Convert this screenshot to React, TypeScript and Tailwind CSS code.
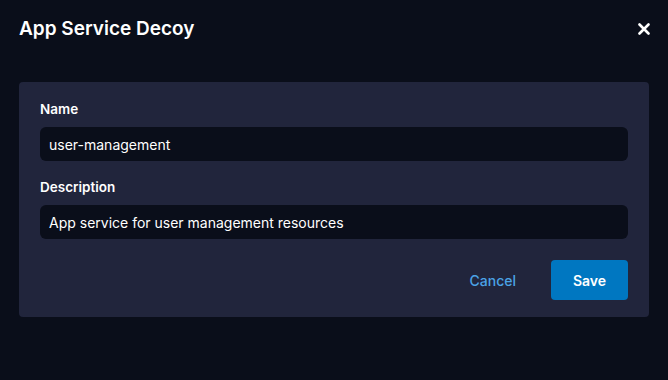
import React from 'react';

const App: React.FC = () => {
  return (
    <div
      className="w-[668px] h-[380px] bg-[#0a0e1a] text-white"
      style={{ fontFamily: 'Inter, "Noto Sans", sans-serif' }}
    >
      {/* Header */}
      <div className="flex items-center justify-between pl-[19px] pr-[18px] pt-[15px]">
        <h1 className="text-[19px] leading-[28px] font-semibold">App Service Decoy</h1>
        <button className="w-3 h-3 flex items-center justify-center">
          <svg width="12" height="12" viewBox="0 0 12 12" fill="none">
            <path d="M1.5 1.5L10.5 10.5M10.5 1.5L1.5 10.5" stroke="white" strokeWidth="2.6" strokeLinecap="round" />
          </svg>
        </button>
      </div>

      {/* Card */}
      <div className="mx-[19px] mt-[39px] rounded bg-[#21253c] px-[21px] pt-[17px] pb-[17px]">
        <div className="flex flex-col gap-4">
          <div>
            <label className="block text-[13.5px] leading-5 font-semibold mb-2">Name</label>
            <div className="h-[34px] rounded-md bg-[#0a0e1a] flex items-center pl-[9px] text-[14px]">
              user-management
            </div>
          </div>
          <div>
            <label className="block text-[13.5px] leading-5 font-semibold mb-2">Description</label>
            <div className="h-[34px] rounded-md bg-[#0a0e1a] flex items-center pl-[9px] text-[14px]">
              App service for user management resources
            </div>
          </div>
        </div>

        {/* Actions */}
        <div className="flex justify-end items-center mt-[21px]">
          <button className="h-10 px-4 mr-[19px] text-[14px] font-medium text-[#4ba3e6]">Cancel</button>
          <button className="h-10 w-[77px] rounded bg-[#0077c1] text-[14px] font-semibold text-white">
            Save
          </button>
        </div>
      </div>
    </div>
  );
};

export default App;
